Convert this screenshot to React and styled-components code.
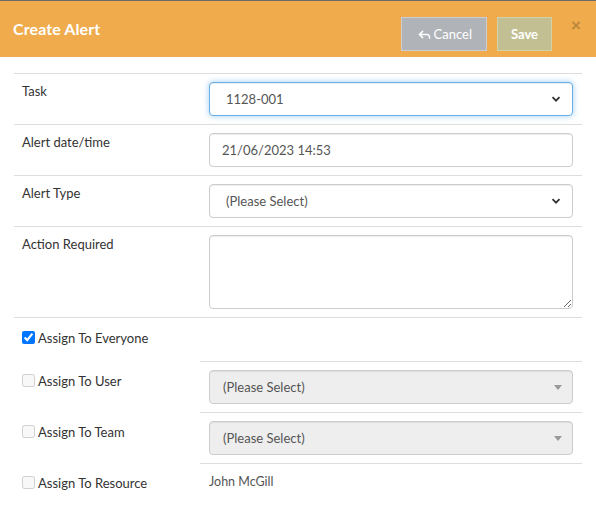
import React from "react";
import styled, { createGlobalStyle } from "styled-components";
import { Reply } from "lucide-react";

const GlobalStyle = createGlobalStyle`
  html, body {
    margin: 0;
    padding: 0;
    background: #ffffff;
  }
  body {
    font-family: Lato, "Open Sans", Arial, sans-serif;
  }
`;

const Modal = styled.div`
  width: 596px;
  height: 522px;
  background: #fff;
  box-sizing: border-box;
  overflow: hidden;
`;

const Header = styled.div`
  height: 57px;
  background: #efab4c;
  border-top: 1px solid #6b6b6b;
  box-sizing: border-box;
  display: flex;
  align-items: center;
  padding: 0 15px 0 13px;
`;

const Title = styled.h4`
  margin: 0 0 2px;
  flex: 1;
  color: #fff;
  font-size: 16px;
  font-weight: 700;
  letter-spacing: 0.1px;
`;

const HeaderButton = styled.button`
  height: 34px;
  margin-top: 10px;
  padding: ${(p) => p.$pad};
  border: 1px solid ${(p) => p.$border};
  background: ${(p) => p.$bg};
  color: #fff;
  font-family: inherit;
  font-size: 13px;
  font-weight: ${(p) => (p.$bold ? 700 : 400)};
  display: flex;
  align-items: center;
  gap: 2px;
  cursor: pointer;
  margin-left: ${(p) => p.$gap}px;
`;

const Close = styled.span`
  align-self: flex-start;
  margin: 16px 0 0 19px;
  font-size: 17px;
  font-weight: 700;
  line-height: 1;
  color: #000;
  opacity: 0.2;
  font-family: "Liberation Sans", Arial, sans-serif;
`;

const Body = styled.div`
  padding: 16px 14px 0;
`;

const Row = styled.div`
  display: grid;
  grid-template-columns: 186px 1fr;
  border-top: ${(p) => (p.$split ? "none" : "1px solid #dddddd")};
  min-height: ${(p) => p.$minHeight || 0}px;
`;

const LabelCell = styled.div`
  padding: ${(p) => (p.$check ? "11px 8px 8px" : "8px")};
  font-size: 13px;
  line-height: 18px;
  color: #333;
  display: flex;
  align-items: flex-start;
  gap: 2px;
  grid-column: ${(p) => (p.$wide ? "1 / span 2" : "auto")};
`;

const ControlCell = styled.div`
  padding: 8px 9px;
  border-top: ${(p) => (p.$split ? "1px solid #dddddd" : "none")};
  font-size: 13px;
  color: #555;
`;

const chevron =
  "url(\"data:image/svg+xml,%3Csvg xmlns='http://www.w3.org/2000/svg' width='10' height='10' viewBox='0 0 10 10'%3E%3Cpath d='M1.5 3.2 5 6.7 8.5 3.2' fill='none' stroke='%23333' stroke-width='1.8'/%3E%3C/svg%3E\")";
const triangle =
  "url(\"data:image/svg+xml,%3Csvg xmlns='http://www.w3.org/2000/svg' width='8' height='5' viewBox='0 0 8 5'%3E%3Cpath d='M0 0h8L4 5z' fill='%23999'/%3E%3C/svg%3E\")";

const Select = styled.select`
  width: 100%;
  height: 34px;
  box-sizing: border-box;
  appearance: none;
  -webkit-appearance: none;
  padding: 0 30px 0 16px;
  font-family: inherit;
  font-size: 13px;
  color: #555;
  border-radius: 4px;
  border: 1px solid ${(p) => (p.$focused ? "#66afe9" : "#cccccc")};
  box-shadow: ${(p) =>
    p.$focused
      ? "inset 0 1px 1px rgba(0,0,0,.075), 0 0 6px rgba(102,175,233,.6)"
      : "inset 0 1px 1px rgba(0,0,0,.075)"};
  background: #fff ${chevron} no-repeat right 11px center;
  outline: none;

  &:disabled {
    background: #eeeeee ${triangle} no-repeat right 10px center;
    padding-left: 13px;
    color: #555;
    opacity: 1;
  }
`;

const Input = styled.input`
  width: 100%;
  height: 34px;
  box-sizing: border-box;
  padding: 0 12px;
  font-family: inherit;
  font-size: 13px;
  color: #555;
  border: 1px solid #cccccc;
  border-radius: 4px;
  box-shadow: inset 0 1px 1px rgba(0,0,0,.075);
  outline: none;
`;

const TextArea = styled.textarea`
  display: block;
  width: 100%;
  height: 74px;
  box-sizing: border-box;
  border: 1px solid #cccccc;
  border-radius: 4px;
  box-shadow: inset 0 1px 1px rgba(0,0,0,.075);
  font-family: inherit;
  resize: vertical;
  outline: none;
`;

const Check = styled.input`
  margin: 2px 1px 0 0;
  width: 13px;
  height: 13px;
  flex: none;
`;

const PlainValue = styled.div`
  padding-top: 1px;
  line-height: 18px;
  color: #555;
  font-size: 12.5px;
`;

const assignRows = [
  { label: "Assign To User", kind: "select" },
  { label: "Assign To Team", kind: "select" },
  { label: "Assign To Resource", kind: "text", value: "John McGill" },
];

export default function App() {
  return (
    <Modal>
      <GlobalStyle />
      <Header>
        <Title>Create Alert</Title>
        <HeaderButton $bg="#b0b3b8" $border="#cbcdd2" $gap={0} $pad="0 14px 0 15px">
          <Reply size={15} strokeWidth={2.4} />
          Cancel
        </HeaderButton>
        <HeaderButton $bg="#c2bf93" $border="#d3d1a8" $gap={10} $pad="0 13px" $bold>
          Save
        </HeaderButton>
        <Close>×</Close>
      </Header>
      <Body>
        <Row>
          <LabelCell>Task</LabelCell>
          <ControlCell>
            <Select $focused defaultValue="1128-001">
              <option>1128-001</option>
            </Select>
          </ControlCell>
        </Row>
        <Row>
          <LabelCell>Alert date/time</LabelCell>
          <ControlCell>
            <Input defaultValue="21/06/2023 14:53" />
          </ControlCell>
        </Row>
        <Row>
          <LabelCell>Alert Type</LabelCell>
          <ControlCell>
            <Select defaultValue="">
              <option value="">(Please Select)</option>
            </Select>
          </ControlCell>
        </Row>
        <Row>
          <LabelCell>Action Required</LabelCell>
          <ControlCell>
            <TextArea />
          </ControlCell>
        </Row>
        <Row $minHeight={43}>
          <LabelCell $check $wide>
            <Check type="checkbox" defaultChecked />
            Assign To Everyone
          </LabelCell>
        </Row>
        {assignRows.map((r) => (
          <Row key={r.label} $split>
            <LabelCell $check>
              <Check type="checkbox" disabled />
              {r.label}
            </LabelCell>
            <ControlCell $split>
              {r.kind === "select" ? (
                <Select disabled defaultValue="">
                  <option value="">(Please Select)</option>
                </Select>
              ) : (
                <PlainValue>{r.value}</PlainValue>
              )}
            </ControlCell>
          </Row>
        ))}
      </Body>
    </Modal>
  );
}
